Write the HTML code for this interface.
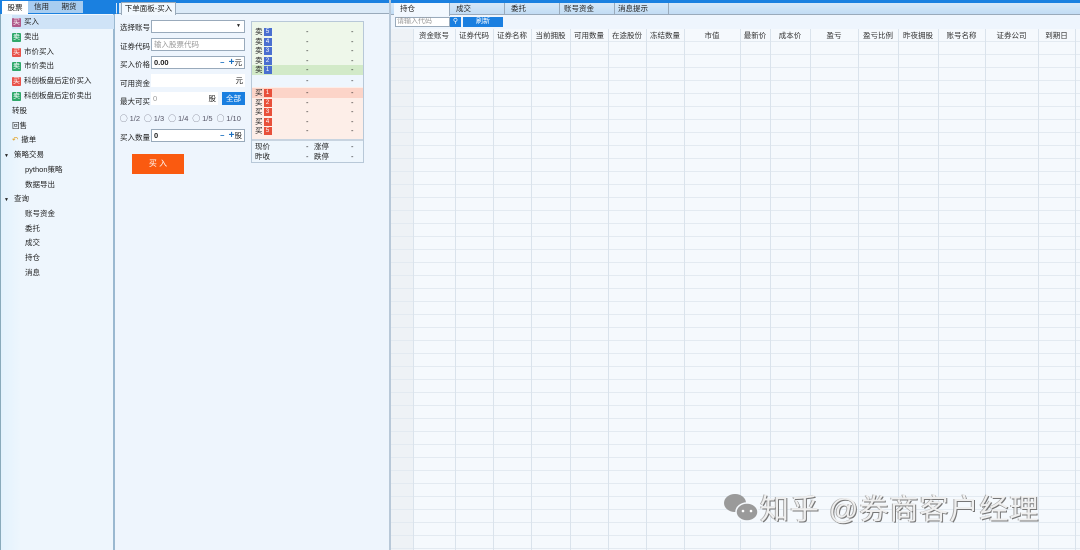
<!DOCTYPE html><html><head><meta charset="utf-8"><style>
*{margin:0;padding:0;box-sizing:border-box}
body{width:1080px;height:550px;overflow:hidden;background:#eef5fd;font-family:"Liberation Sans","Noto Sans CJK SC",sans-serif;font-size:7.5px;color:#222;position:relative}
.a{position:absolute;white-space:nowrap}
.ic{display:inline-block;width:9px;height:9px;color:#fff;font-size:7px;line-height:9px;text-align:center;border-radius:1px;margin-right:3px;vertical-align:middle}
.r{background:#e8524a}.g{background:#2fa86a}.p{background:#b05a8a}
.li{position:absolute;left:12px;height:14px;line-height:14px}
.inp{position:absolute;background:#fff;border:1px solid #9ab;height:13px;line-height:11px;padding-left:2px}
.q{position:absolute;left:0;width:113px;height:9.6px;line-height:9.6px}
.q span{position:absolute}
.n{display:inline-block;width:8px;height:8px;font-size:6px;line-height:8px;color:#fff;text-align:center;vertical-align:middle;margin-left:1px;font-style:normal}
.th{position:absolute;top:29px;height:13px;line-height:13px;text-align:center;color:#333}
</style></head><body>
<div class="a" style="left:0;top:0;width:115px;height:550px;background:linear-gradient(90deg,#e2f2fd,#eef6fd 20px);border-left:1px solid #8ab;border-right:2px solid #9ab8d0"></div>
<div class="a" style="left:0;top:0;width:116px;height:14px;background:#1a80e0"></div>
<div class="a" style="left:2px;top:1px;width:26px;height:13px;background:#fff;line-height:13px;text-align:center">股票</div>
<div class="a" style="left:28px;top:1px;width:27px;height:12px;background:#a8cdf0;line-height:12px;text-align:center">信用</div>
<div class="a" style="left:55px;top:1px;width:28px;height:12px;background:#a8cdf0;line-height:12px;text-align:center">期货</div>
<div class="a" style="left:12px;top:15px;width:102px;height:14px;background:#cfe3f7"></div>
<div class="li" style="top:15px"><span class="ic p">买</span>买入</div>
<div class="li" style="top:30px"><span class="ic g">卖</span>卖出</div>
<div class="li" style="top:45px"><span class="ic r">买</span>市价买入</div>
<div class="li" style="top:59px"><span class="ic g">卖</span>市价卖出</div>
<div class="li" style="top:74px"><span class="ic r">买</span>科创板盘后定价买入</div>
<div class="li" style="top:89px"><span class="ic g">卖</span>科创板盘后定价卖出</div>
<div class="li" style="top:104px">转股</div>
<div class="li" style="top:119px">回售</div>
<div class="li" style="top:133px"><span style="color:#e0a020;margin-right:3px">↶</span>撤单</div>
<div class="li" style="top:148px;left:4px"><span style="font-size:5px;margin-right:5px">▼</span>策略交易</div>
<div class="li" style="top:163px;left:25px">python策略</div>
<div class="li" style="top:178px;left:25px">数据导出</div>
<div class="li" style="top:192px;left:4px"><span style="font-size:5px;margin-right:5px">▼</span>查询</div>
<div class="li" style="top:207px;left:25px">账号资金</div>
<div class="li" style="top:222px;left:25px">委托</div>
<div class="li" style="top:236px;left:25px">成交</div>
<div class="li" style="top:251px;left:25px">持仓</div>
<div class="li" style="top:266px;left:25px">消息</div>
<div class="a" style="left:116px;top:0;width:274px;height:3px;background:#1a80e0"></div>
<div class="a" style="left:116px;top:3px;width:274px;height:11px;background:#dbeaf8;border-bottom:1px solid #9ab"></div>
<div class="a" style="left:117px;top:3px;width:2px;height:11px;background:#1a80e0"></div>
<div class="a" style="left:121px;top:2px;width:55px;height:13px;background:#f2f8fe;border:1px solid #9ab;border-bottom:none;line-height:12px;text-align:center">下单面板-买入</div>
<div class="a" style="left:389px;top:0;width:2px;height:550px;background:#b8c8d8"></div>
<div class="a" style="left:120px;top:22px">选择账号</div>
<div class="inp" style="left:151px;top:20px;width:94px"><span style="position:absolute;right:3px;font-size:5px">▼</span></div>
<div class="a" style="left:120px;top:41px">证券代码</div>
<div class="inp" style="left:151px;top:38px;width:94px;color:#999">输入股票代码</div>
<div class="a" style="left:120px;top:59px">买入价格</div>
<div class="inp" style="left:151px;top:56px;width:94px;font-weight:bold">0.00<span style="position:absolute;right:2px;font-weight:normal"><b style="color:#1a6fc0">−</b> &nbsp;<b style="color:#1a6fc0;font-size:10px">+</b>元</span></div>
<div class="a" style="left:120px;top:78px">可用资金</div>
<div class="a" style="left:151px;top:74px;width:94px;height:13px;background:#fff;text-align:right;line-height:13px;padding-right:2px">元</div>
<div class="a" style="left:120px;top:96px">最大可买</div>
<div class="a" style="left:151px;top:92px;width:67px;height:13px;background:#fff;line-height:13px;padding-left:2px;color:#999">0<span style="position:absolute;right:2px;color:#222">股</span></div>
<div class="a" style="left:222px;top:92px;width:23px;height:13px;background:#1a7fe0;color:#fff;text-align:center;line-height:13px">全部</div>
<div class="a" style="left:120px;top:113px;color:#556">◯ 1/2 &nbsp;◯ 1/3 &nbsp;◯ 1/4 &nbsp;◯ 1/5 &nbsp;◯ 1/10</div>
<div class="a" style="left:120px;top:132px">买入数量</div>
<div class="inp" style="left:151px;top:129px;width:94px;font-weight:bold">0<span style="position:absolute;right:2px;font-weight:normal"><b style="color:#1a6fc0">−</b> &nbsp;<b style="color:#1a6fc0;font-size:10px">+</b>股</span></div>
<div class="a" style="left:132px;top:154px;width:52px;height:20px;background:#fa5a10;color:#fff;text-align:center;line-height:20px;font-size:8px">买 入</div>
<div class="a" style="left:251px;top:21px;width:113px;height:142px;border:1px solid #b8c8d8;background:#eef6fd;overflow:hidden">
<div style="position:absolute;left:0;top:0;width:113px;height:53px;background:#eef7ea"></div>
<div style="position:absolute;left:0;top:65px;width:113px;height:52px;background:#fdeee8"></div>
<div class="q" style="top:5px"><span style="left:3px">卖<i class="n" style="background:#4a6fd0">5</i></span><span style="left:54px">-</span><span style="left:99px">-</span></div>
<div class="q" style="top:14.6px"><span style="left:3px">卖<i class="n" style="background:#4a6fd0">4</i></span><span style="left:54px">-</span><span style="left:99px">-</span></div>
<div class="q" style="top:24.2px"><span style="left:3px">卖<i class="n" style="background:#4a6fd0">3</i></span><span style="left:54px">-</span><span style="left:99px">-</span></div>
<div class="q" style="top:33.8px"><span style="left:3px">卖<i class="n" style="background:#4a6fd0">2</i></span><span style="left:54px">-</span><span style="left:99px">-</span></div>
<div class="q" style="top:43.4px;background:#d2eac8"><span style="left:3px">卖<i class="n" style="background:#4a6fd0">1</i></span><span style="left:54px">-</span><span style="left:99px">-</span></div>
<div class="q" style="top:54px"><span style="left:54px">-</span><span style="left:99px">-</span></div>
<div class="q" style="top:66px;background:#fcd4c8"><span style="left:3px">买<i class="n" style="background:#e8503a">1</i></span><span style="left:54px">-</span><span style="left:99px">-</span></div>
<div class="q" style="top:75.6px"><span style="left:3px">买<i class="n" style="background:#e8503a">2</i></span><span style="left:54px">-</span><span style="left:99px">-</span></div>
<div class="q" style="top:85.2px"><span style="left:3px">买<i class="n" style="background:#e8503a">3</i></span><span style="left:54px">-</span><span style="left:99px">-</span></div>
<div class="q" style="top:94.8px"><span style="left:3px">买<i class="n" style="background:#e8503a">4</i></span><span style="left:54px">-</span><span style="left:99px">-</span></div>
<div class="q" style="top:104.4px"><span style="left:3px">买<i class="n" style="background:#e8503a">5</i></span><span style="left:54px">-</span><span style="left:99px">-</span></div>
<div style="position:absolute;left:0;top:117px;width:113px;height:2px;background:#c8d4e0"></div>
<div class="q" style="top:120px"><span style="left:3px">现价</span><span style="left:54px">-</span><span style="left:62px">涨停</span><span style="left:99px">-</span></div>
<div class="q" style="top:129.6px"><span style="left:3px">昨收</span><span style="left:54px">-</span><span style="left:62px">跌停</span><span style="left:99px">-</span></div>
</div>
<div class="a" style="left:391px;top:0;width:689px;height:3px;background:#1a80e0"></div>
<div class="a" style="left:391px;top:3px;width:689px;height:12px;background:linear-gradient(#d6e8f8,#c2dcf4);border-bottom:1px solid #9ab"></div>
<div class="a" style="left:394px;top:3px;width:56px;height:13px;background:#f2f8fe;border-right:1px solid #9ab;line-height:12px;padding-left:6px">持仓</div>
<div class="a" style="left:450px;top:3px;width:55px;height:12px;border-right:1px solid #9ab;line-height:12px;padding-left:6px">成交</div>
<div class="a" style="left:505px;top:3px;width:55px;height:12px;border-right:1px solid #9ab;line-height:12px;padding-left:6px">委托</div>
<div class="a" style="left:560px;top:3px;width:55px;height:12px;border-right:1px solid #9ab;line-height:12px;padding-left:4px">账号资金</div>
<div class="a" style="left:615px;top:3px;width:54px;height:12px;border-right:1px solid #9ab;line-height:12px;padding-left:3px">消息提示</div>
<div class="a" style="left:395px;top:17px;width:55px;height:10px;background:#fff;border:1px solid #9ab;line-height:8px;color:#999;padding-left:1px;font-size:7px">请输入代码</div>
<div class="a" style="left:450px;top:17px;width:11px;height:10px;background:#1a7fe0;color:#fff;text-align:center;line-height:10px;font-size:7px">⚲</div>
<div class="a" style="left:463px;top:17px;width:40px;height:10px;background:#1a7fe0;color:#fff;text-align:center;line-height:10px;font-size:7px">刷新</div>
<div class="a" style="left:391px;top:29px;width:689px;height:521px;background-color:#f5f9fd;background-image:repeating-linear-gradient(180deg,transparent 0,transparent 12px,#e3eaf1 12px,#e3eaf1 13px),linear-gradient(90deg,#eef2f6 0,#eef2f6 22px,transparent 22px)"></div>
<svg class="a" style="left:391px;top:29px" width="689" height="521">
<g stroke="#dae3ec" stroke-width="1">
<line x1="22.5" y1="0" x2="22.5" y2="521"/><line x1="64.5" y1="0" x2="64.5" y2="521"/><line x1="102.5" y1="0" x2="102.5" y2="521"/><line x1="140.5" y1="0" x2="140.5" y2="521"/><line x1="179.5" y1="0" x2="179.5" y2="521"/><line x1="217.5" y1="0" x2="217.5" y2="521"/><line x1="255.5" y1="0" x2="255.5" y2="521"/><line x1="293.5" y1="0" x2="293.5" y2="521"/><line x1="349.5" y1="0" x2="349.5" y2="521"/><line x1="379.5" y1="0" x2="379.5" y2="521"/><line x1="419.5" y1="0" x2="419.5" y2="521"/><line x1="467.5" y1="0" x2="467.5" y2="521"/><line x1="507.5" y1="0" x2="507.5" y2="521"/><line x1="547.5" y1="0" x2="547.5" y2="521"/><line x1="594.5" y1="0" x2="594.5" y2="521"/><line x1="647.5" y1="0" x2="647.5" y2="521"/><line x1="684.5" y1="0" x2="684.5" y2="521"/>
</g></svg>
<div class="th" style="left:413px;width:42px">资金账号</div>
<div class="th" style="left:455px;width:38px">证券代码</div>
<div class="th" style="left:493px;width:38px">证券名称</div>
<div class="th" style="left:531px;width:39px">当前拥股</div>
<div class="th" style="left:570px;width:38px">可用数量</div>
<div class="th" style="left:608px;width:38px">在途股份</div>
<div class="th" style="left:646px;width:38px">冻结数量</div>
<div class="th" style="left:684px;width:56px">市值</div>
<div class="th" style="left:740px;width:30px">最新价</div>
<div class="th" style="left:770px;width:40px">成本价</div>
<div class="th" style="left:810px;width:48px">盈亏</div>
<div class="th" style="left:858px;width:40px">盈亏比例</div>
<div class="th" style="left:898px;width:40px">昨夜拥股</div>
<div class="th" style="left:938px;width:47px">账号名称</div>
<div class="th" style="left:985px;width:53px">证券公司</div>
<div class="th" style="left:1038px;width:37px">到期日</div>
<svg class="a" style="left:722px;top:490px" width="40" height="36"><ellipse cx="13" cy="13" rx="11" ry="9" fill="#9a9a9a"/><ellipse cx="25" cy="22" rx="11" ry="9" fill="#9a9a9a" stroke="#f5f9fd" stroke-width="1.5"/><circle cx="21" cy="21" r="1.3" fill="#fff"/><circle cx="29" cy="21" r="1.3" fill="#fff"/></svg>
<div class="a" style="left:760px;top:486px;font-size:29px;color:#efefef;text-shadow:1px 1px 0 #777,-1px 0 0 #aaa;letter-spacing:1px">知乎 @券商客户经理</div>
</body></html>
